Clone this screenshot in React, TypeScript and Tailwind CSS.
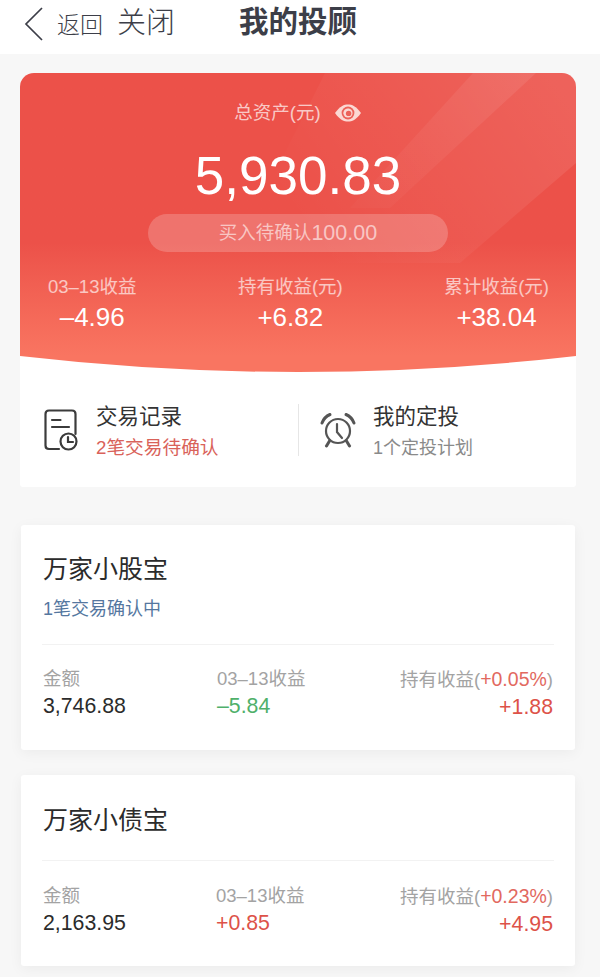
import React from 'react';

const font = 'font-["Liberation_Sans","Noto_Sans_CJK_SC",sans-serif]';

const Chevron = () => (
  <svg width="20" height="34" viewBox="0 0 20 34" fill="none" stroke="#3c3e48" strokeWidth="1.7">
    <path d="M18 1 L2 17 L18 33" />
  </svg>
);

const Eye = () => (
  <svg width="28" height="18" viewBox="0 0 28 18">
    <path d="M1 9 C6 2 10 0.5 14 0.5 C18 0.5 22 2 27 9 C22 16 18 17.5 14 17.5 C10 17.5 6 16 1 9 Z" fill="#fbd8d3" />
    <circle cx="14" cy="9" r="6.4" fill="#ec6259" />
    <circle cx="14" cy="9" r="4.6" fill="#fbd8d3" />
    <path d="M15 4.8 A4.4 4.4 0 0 0 10.2 11 A6 6 0 0 1 15 4.8 Z" fill="#fbd8d3" />
    <circle cx="14.6" cy="9.4" r="2.7" fill="#ec6259" />
  </svg>
);

const FileClock = () => (
  <svg width="34" height="42" viewBox="0 0 34 42" fill="none" stroke="#3b3b3b" strokeWidth="2.2" strokeLinecap="round">
    <path d="M15 40 H5 Q1.5 40 1.5 36.5 V5 Q1.5 1.5 5 1.5 H28 Q31.5 1.5 31.5 5 V25" />
    <path d="M8 11 H16.5" />
    <path d="M8 18 H25" />
    <circle cx="24.5" cy="32.5" r="8" />
    <path d="M24 28 V33 H29" />
  </svg>
);

const AlarmClock = () => (
  <svg width="36" height="38" viewBox="0 0 36 38" fill="none" stroke="#555555" strokeWidth="2.2" strokeLinecap="round">
    <circle cx="18" cy="20" r="12" />
    <path d="M17 13 V21 L22 27" />
    <path d="M2 12 C3.5 8 6.5 5 10 3.5" strokeWidth="3" />
    <path d="M34 12 C32.5 8 29.5 5 26 3.5" strokeWidth="3" />
    <path d="M9.5 30 L6.5 35" strokeWidth="3" />
    <path d="M26.5 30 L29.5 35" strokeWidth="3" />
  </svg>
);

const HeroBands = () => (
  <svg className="absolute left-0 top-0" width="556" height="283" viewBox="0 0 556 283">
    <defs>
      <linearGradient id="bandFade" gradientUnits="userSpaceOnUse" x1="540" y1="10" x2="300" y2="180">
        <stop offset="0" stopColor="#fff" stopOpacity="0.2" />
        <stop offset="1" stopColor="#fff" stopOpacity="0" />
      </linearGradient>
    </defs>
    <path d="M305 0 H556 V90 L440 190 H210 Z" fill="url(#bandFade)" opacity="0.5" />
    <path d="M453 0 H516 L370 135 H330 Z" fill="url(#bandFade)" opacity="0.45" />
  </svg>
);

interface StatProps {
  label: string;
  value: string;
}

const HeroStat: React.FC<StatProps> = ({ label, value }) => (
  <div className="flex flex-col items-center">
    <span className="text-[18.5px] leading-6 text-white/65 whitespace-nowrap">{label}</span>
    <span className="mt-[3px] text-[26px] leading-[30px] text-white">{value}</span>
  </div>
);

interface FundCardProps {
  name: string;
  note?: string;
  amount: string;
  daily: string;
  dailyColor: string;
  rate: string;
  total: string;
  cols: string;
  className: string;
}

const FundCard: React.FC<FundCardProps> = ({ name, note, amount, daily, dailyColor, rate, total, cols, className }) => (
  <section className={`ml-[21px] mr-[25px] rounded-[3px] bg-white px-[22px] shadow-[0_3px_14px_rgba(0,0,0,0.05)] ${className}`}>
    <h2 className="text-[25px] leading-[34px] text-[#2b2b2b]">{name}</h2>
    {note && <p className="mt-[10px] text-[18px] leading-[26px] text-[#55779f]">{note}</p>}
    <div className={`${note ? 'mt-[22px]' : 'mt-[23px]'} -mx-px h-px bg-[#f2f2f2]`} />
    <div className={`${note ? 'mt-[21px]' : 'mt-[22px]'} grid ${cols}`}>
      <div className="flex flex-col">
        <span className="text-[18.5px] leading-[26px] text-[#a3a3a3]">金额</span>
        <span className="text-[21.3px] leading-7 text-[#2b2b2b]">{amount}</span>
      </div>
      <div className="flex flex-col">
        <span className="text-[18.5px] leading-[26px] text-[#a3a3a3]">03–13收益</span>
        <span className={`text-[21.3px] leading-7 ${dailyColor}`}>{daily}</span>
      </div>
      <div className="flex flex-col items-end">
        <span className="text-[18.5px] leading-[26px] text-[#a3a3a3] whitespace-nowrap">
          持有收益(<span className="text-[19.5px] text-[#e2695f]">{rate}</span>)
        </span>
        <span className="text-[21.3px] leading-7 text-[#dd5248]">{total}</span>
      </div>
    </div>
  </section>
);

export default function App() {
  return (
    <div className={`h-[977px] w-[600px] overflow-hidden bg-[#f7f7f7] ${font}`}>
      <header className="flex h-[54px] items-center bg-white pb-[6px] pl-[24px]">
        <Chevron />
        <span className="ml-[13px] mt-[2px] text-[23px] font-light text-[#3c3e48]">返回</span>
        <span className="ml-[14px] text-[29px] font-light text-[#3c3e48]">关闭</span>
        <h1 className="ml-[64px] mb-[3px] text-[29.5px] font-bold text-[#3c3e48]">我的投顾</h1>
      </header>

      <main className="pt-[19px]">
        <section className="ml-[20px] mr-[24px] overflow-hidden rounded-t-[14px] rounded-b-[3px] bg-white">
          <div className="relative flex flex-col items-center bg-gradient-to-b from-[#ec5149] from-60% to-[#f97561] pt-[27px] pb-[24px]">
            <HeroBands />
            <div className="relative flex h-[26px] items-center gap-[13px]">
              <span className="text-[18.5px] text-white/70">总资产(元)</span>
              <Eye />
            </div>
            <div className="relative mt-[20px] text-[53px] leading-[60px] text-white">5,930.83</div>
            <div className="relative mt-[8px] flex h-[38px] w-[300px] items-center justify-center rounded-full bg-white/20 text-[18.5px] text-white/60">
              买入待确认<span className="text-[21.5px]">100.00</span>
            </div>
            <div className="relative mt-[23px] flex w-full justify-between pl-[28px] pr-[27px]">
              <HeroStat label="03–13收益" value="–4.96" />
              <HeroStat label="持有收益(元)" value="+6.82" />
              <HeroStat label="累计收益(元)" value="+38.04" />
            </div>
          </div>
          <svg className="block" width="556" height="16" viewBox="0 0 556 16">
            <path d="M0 0 H556 Q278 32 0 0 Z" fill="#f97561" />
          </svg>
          <div className="flex h-[115px] items-center">
            <div className="flex w-[278px] items-center pl-[24px]">
              <FileClock />
              <div className="ml-[18px] mt-[4px] flex flex-col">
                <span className="text-[21.5px] leading-[32px] text-[#333333]">交易记录</span>
                <span className="text-[18.7px] leading-[30px] text-[#d9625a]">2笔交易待确认</span>
              </div>
            </div>
            <div className="h-[52px] w-px bg-[#e6e6e6]" />
            <div className="flex items-center pl-[21px]">
              <AlarmClock />
              <div className="ml-[17px] mt-[4px] flex flex-col">
                <span className="text-[21.5px] leading-[32px] text-[#333333]">我的定投</span>
                <span className="text-[18px] leading-[30px] text-[#8a8a8a]">1个定投计划</span>
              </div>
            </div>
          </div>
        </section>

        <FundCard
          className="mt-[38px] pt-[27px] pb-[29px]"
          cols="grid-cols-[174px_1fr_auto]"
          name="万家小股宝"
          note="1笔交易确认中"
          amount="3,746.88"
          daily="–5.84"
          dailyColor="text-[#4fb06a]"
          rate="+0.05%"
          total="+1.88"
        />
        <FundCard
          className="mt-[25px] pt-[28px] pb-[28px]"
          cols="grid-cols-[173px_1fr_auto]"
          name="万家小债宝"
          amount="2,163.95"
          daily="+0.85"
          dailyColor="text-[#dd5248]"
          rate="+0.23%"
          total="+4.95"
        />
      </main>
    </div>
  );
}
